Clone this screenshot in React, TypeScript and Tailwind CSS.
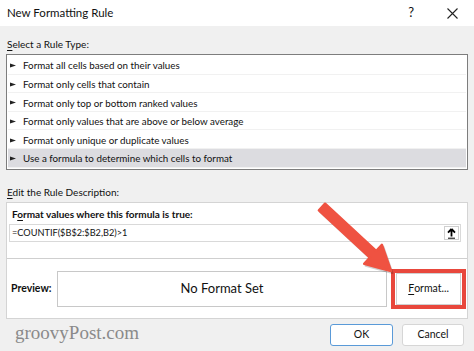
import React from 'react';

const ruleTypes = [
  'Format all cells based on their values',
  'Format only cells that contain',
  'Format only top or bottom ranked values',
  'Format only values that are above or below average',
  'Format only unique or duplicate values',
  'Use a formula to determine which cells to format',
];

function Pointer() {
  return (
    <svg width="6" height="5" viewBox="0 0 6 5" className="shrink-0">
      <path d="M0 0.5 L6 2.5 L0 4.5 Z" fill="#222" />
    </svg>
  );
}

function RedArrow() {
  const pts = '325.1,203.7 376.1,251 381.9,244.8 391,271 364.2,263.8 369.9,257.6 318.9,210.3';
  return (
    <svg className="absolute left-0 top-0 pointer-events-none" width="474" height="351">
      <polygon points={pts} fill="#000" opacity="0.18" transform="translate(1.5,2)" stroke="#000" strokeWidth="2" strokeLinejoin="round" />
      <polygon points={pts} fill="#ef5241" stroke="#ef5241" strokeWidth="2.5" strokeLinejoin="round" />
    </svg>
  );
}

export default function App() {
  return (
    <div className="relative w-[474px] h-[351px] overflow-hidden bg-[#f0f0f0] text-[#111] font-['Lato',sans-serif]">
      {/* title bar */}
      <div className="h-[26px] bg-white flex items-center pl-[7px] pr-[16px]">
        <span className="text-[11.5px]">New Formatting Rule</span>
        <span className="ml-auto mr-[33px] text-[13px]">?</span>
        <svg width="11" height="11" viewBox="0 0 11 11">
          <path d="M0.5 0.5 L10.5 10.5 M10.5 0.5 L0.5 10.5" stroke="#222" strokeWidth="1.1" />
        </svg>
      </div>

      <div className="px-[6px] pt-[10px]">
        <div className="pl-[1px] text-[10px] leading-[16px]">
          <span className="underline underline-offset-2">S</span>elect a Rule Type:
        </div>

        <div className="mt-[2px] h-[116px] border border-[#7d7d7d] bg-white p-[1px]">
          {ruleTypes.map((t, i) => (
            <div
              key={i}
              className={`h-[18.6px] flex items-center gap-[7px] pl-[2px] pt-[2px] text-[9.8px] border-b border-[#f1f1f1] ${
                i === 5 ? 'bg-[#dcdce0]' : ''
              }`}
            >
              <Pointer />
              <span>{t}</span>
            </div>
          ))}
        </div>

        <div className="mt-[14px] pl-[1px] text-[10px] leading-[16px]">
          <span className="underline underline-offset-2">E</span>dit the Rule Description:
        </div>

        <div className="mt-[2px] h-[117px] border border-[#d4d4d4] bg-white flex flex-col">
          <div className="h-[56px] border-b border-[#cfcfcf] px-[2px]">
            <div className="pl-[3px] pt-[3px] text-[10px] font-bold leading-[16px]">
              F<span className="underline underline-offset-2">o</span>rmat values where this formula is true:
            </div>
            <div className="mt-[2px] w-[452px] h-[18px] border border-[#d9d9d9] flex items-center pl-[2px] pr-[1px]">
              <span className="text-[9.2px]">=COUNTIF($B$2:$B2,B2)&gt;1</span>
              <div className="ml-auto w-[15px] h-[14px] border border-[#cfcfcf] bg-white flex items-center justify-center">
                <svg width="9" height="11" viewBox="0 0 9 11">
                  <path d="M4.5 1 L1 4.6 M4.5 1 L8 4.6 M4.5 1 L4.5 8.5" stroke="#000" strokeWidth="1.8" fill="none" />
                  <path d="M1 10.2 L8 10.2" stroke="#000" strokeWidth="1" />
                </svg>
              </div>
            </div>
          </div>

          <div className="flex-1 flex items-center pl-[4px] pr-[1px]">
            <span className="w-[46px] text-[10.5px] font-bold">Preview:</span>
            <div className="w-[331px] h-[36px] border border-[#c8c8c8] flex items-center justify-center text-[13px]">
              No Format Set
            </div>
            <div className="ml-[4px] w-[75px] h-[40px] border-[4px] border-[#e8473c] flex items-center justify-center">
              <div className="w-[65px] h-[32px] bg-white border border-[#d0d0d0] flex items-center justify-center text-[10.5px]">
                <span className="underline underline-offset-2">F</span>ormat...
              </div>
            </div>
          </div>
        </div>

        <div className="mt-[4px] flex items-center">
          <span className="ml-[9px] -mt-[4px] text-[19px] text-[#8a8a8a] font-['Liberation_Serif',serif]">groovyPost.com</span>
          <div className="ml-auto w-[63px] h-[22px] bg-white border border-[#5a9ad8] rounded-[3px] flex items-center justify-center text-[10.5px]">
            OK
          </div>
          <div className="ml-[9px] mr-[4px] w-[62px] h-[22px] bg-white border border-[#d6d6d6] rounded-[3px] flex items-center justify-center text-[10.5px]">
            Cancel
          </div>
        </div>
      </div>

      <RedArrow />
    </div>
  );
}
